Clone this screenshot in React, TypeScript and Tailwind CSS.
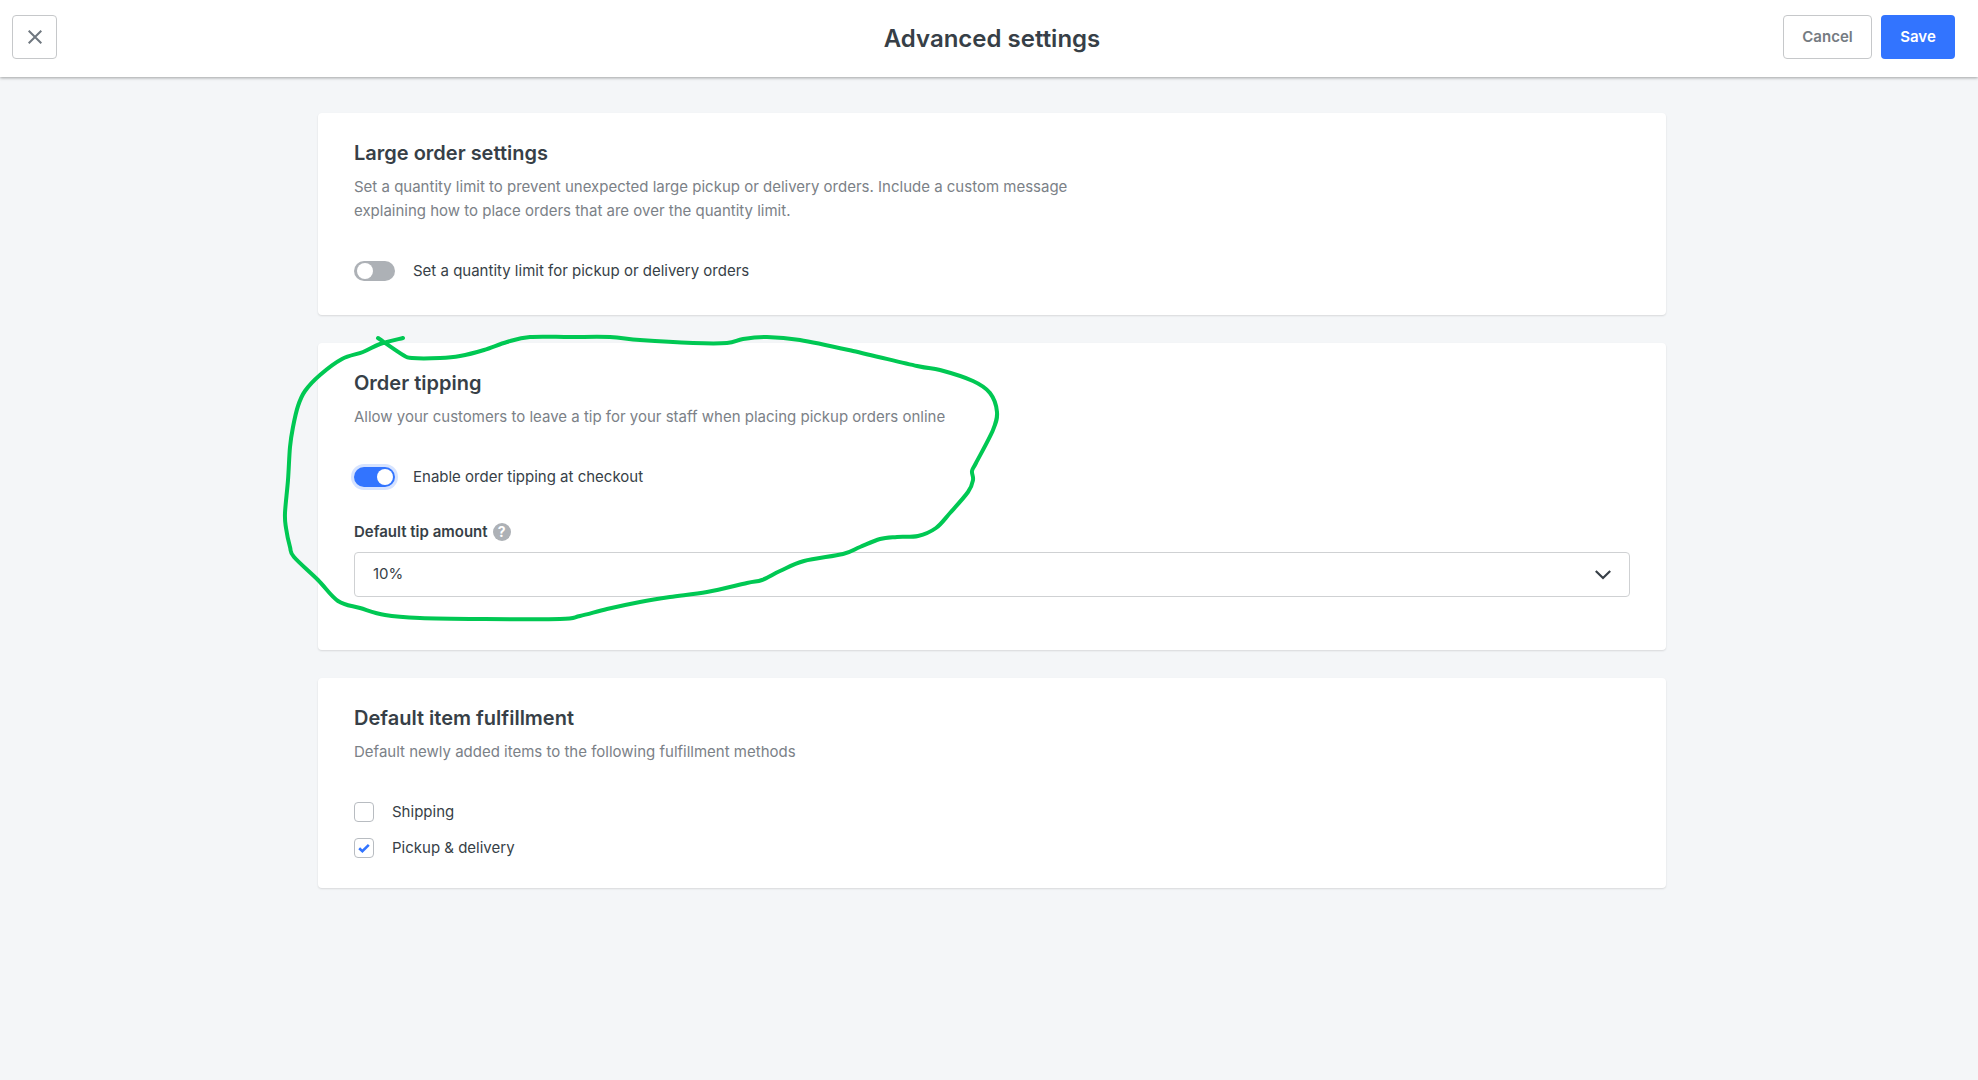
import React, { useState } from 'react';

interface CardProps {
  title: string;
  description: string;
  className?: string;
  children: React.ReactNode;
}

interface FieldProps {
  id: string;
  label: string;
  checked: boolean;
  onChange: (checked: boolean) => void;
}

// pen stroke drawn around the tipping section
const strokePoints: [number, number][] = [
  [403, 338], [380, 344], [363, 352], [342, 359], [320, 375], [305, 391], [298, 406], [293, 427],
  [290, 447], [288, 480], [285, 513], [286, 528], [290, 547], [294, 557], [318, 580], [338, 601],
  [360, 608], [385, 615], [420, 618], [480, 619], [560, 619], [580, 616], [607, 609], [640, 602],
  [670, 597], [707, 592], [747, 583], [762, 580], [780, 571], [804, 561], [843, 554], [860, 547],
  [880, 539], [897, 537], [918, 536], [936, 528], [950, 513], [968, 492], [973, 480], [972, 471],
  [976, 463], [993, 430], [997, 412], [990, 393], [973, 381], [940, 370], [917, 366], [853, 351],
  [800, 340], [767, 337], [743, 339], [727, 343], [693, 343], [640, 340], [610, 337], [570, 337],
  [530, 337], [507, 342], [484, 350], [460, 356], [440, 358], [412, 358], [403, 355], [378, 338],
];

const smoothPath = (points: [number, number][]) => {
  let d = `M${points[0][0]} ${points[0][1]}`;
  for (let i = 0; i < points.length - 1; i++) {
    const p0 = points[i - 1] || points[i];
    const p1 = points[i];
    const p2 = points[i + 1];
    const p3 = points[i + 2] || p2;
    d += `C${p1[0] + (p2[0] - p0[0]) / 6} ${p1[1] + (p2[1] - p0[1]) / 6} ${p2[0] - (p3[0] - p1[0]) / 6} ${p2[1] - (p3[1] - p1[1]) / 6} ${p2[0]} ${p2[1]}`;
  }
  return d;
};

const Card = ({ title, description, className = '', children }: CardProps) => (
  <section className={`relative rounded bg-white px-9 pt-[26px] shadow-[0_1px_2px_rgba(0,0,0,0.12)] ${className}`}>
    <h2 className="text-xl leading-7 font-semibold">{title}</h2>
    <p className="mt-2 mb-9 max-w-[752px] leading-6 text-[#7b8187]">{description}</p>
    {children}
  </section>
);

const Toggle = ({ id, label, checked, onChange }: FieldProps) => (
  <div className="flex items-center">
    <input
      id={id}
      type="checkbox"
      role="switch"
      checked={checked}
      onChange={(e) => onChange(e.target.checked)}
      className={`h-5 w-[41px] shrink-0 appearance-none rounded-full p-0.5 before:block before:size-4 before:rounded-full before:bg-white ${
        checked ? 'bg-[#3274ff] ring-[3px] ring-[#d6e3ff] before:ml-[21px]' : 'bg-[#adb1b6] before:ml-px'
      }`}
    />
    <label htmlFor={id} className="pl-[18px] leading-6">{label}</label>
  </div>
);

const Checkbox = ({ id, label, checked, onChange }: FieldProps) => (
  <div className="flex items-center">
    <span className="relative flex size-5">
      <input
        id={id}
        type="checkbox"
        checked={checked}
        onChange={(e) => onChange(e.target.checked)}
        className="size-5 appearance-none rounded border border-[#b8bcc1] bg-white"
      />
      {checked && (
        <svg viewBox="0 0 20 20" className="pointer-events-none absolute inset-0 size-5" fill="none" stroke="#3274ff" strokeWidth="2.6">
          <path d="M5.2 10.2 8.4 13.2 14.8 6.8" />
        </svg>
      )}
    </span>
    <label htmlFor={id} className="pl-[18px] leading-6">{label}</label>
  </div>
);

export default function App() {
  const [quantityLimit, setQuantityLimit] = useState(false);
  const [tipping, setTipping] = useState(true);
  const [tip, setTip] = useState('10%');
  const [shipping, setShipping] = useState(false);
  const [pickup, setPickup] = useState(true);

  return (
    <div className="min-h-screen bg-[#f4f6f8] pb-12 font-['Inter',sans-serif] text-[15px] text-[#373f47]">
      {/* Header */}
      <header className="relative grid grid-cols-[1fr_auto_1fr] items-center bg-white pt-[15px] pr-1.5 pb-[18px] pl-3 shadow-[0_1px_3px_rgba(0,0,0,0.35)]">
        <button aria-label="Close" className="flex h-11 w-[45px] items-center justify-center rounded border border-[#c6c8ca]">
          <svg viewBox="0 0 14 14" className="size-3.5" fill="none" stroke="#6f777f" strokeWidth="2">
            <path d="M.7.7 13.3 13.3M13.3.7.7 13.3" />
          </svg>
        </button>
        <h1 className="pt-1 text-2xl leading-8 font-semibold">Advanced settings</h1>
        <div className="mr-[17px] flex justify-end gap-[9px] font-semibold">
          <button className="h-11 w-[89px] rounded border border-[#c6c8ca] text-[#757b82]">Cancel</button>
          <button className="h-11 w-[74px] rounded bg-[#3274ff] text-white">Save</button>
        </div>
      </header>

      <main className="pt-9 pl-1.5">
        <div className="mx-auto flex max-w-[1348px] flex-col gap-7">
          <Card
            title="Large order settings"
            description="Set a quantity limit to prevent unexpected large pickup or delivery orders. Include a custom message explaining how to place orders that are over the quantity limit."
            className="pb-8"
          >
            <Toggle id="quantity-limit" label="Set a quantity limit for pickup or delivery orders" checked={quantityLimit} onChange={setQuantityLimit} />
          </Card>

          <Card
            title="Order tipping"
            description="Allow your customers to leave a tip for your staff when placing pickup orders online"
            className="pb-[53px]"
          >
            <Toggle id="tipping" label="Enable order tipping at checkout" checked={tipping} onChange={setTipping} />
            <div className="mt-[31px] mb-2 flex items-center gap-[5px]">
              <label htmlFor="tip" className="leading-6 font-semibold">Default tip amount</label>
              <button aria-label="Help" className="flex size-[18px] items-center justify-center rounded-full bg-[#adb1b6] text-sm leading-none font-bold text-white">
                ?
              </button>
            </div>
            <div className="relative">
              <select
                id="tip"
                value={tip}
                onChange={(e) => setTip(e.target.value)}
                className="h-[45px] w-full appearance-none rounded border border-[#cfd1d3] bg-white px-[18px]"
              >
                <option>10%</option>
                <option>15%</option>
                <option>20%</option>
              </select>
              <svg viewBox="0 0 16 10" className="pointer-events-none absolute top-[18px] right-[19px] h-2.5 w-4" fill="none" stroke="#373f47" strokeWidth="2.2">
                <path d="M.8 1 8 8 15.2 1" />
              </svg>
            </div>
            <svg
              viewBox="279 330 730 300"
              className="pointer-events-none absolute -top-[13px] -left-[39px] h-[300px] w-[730px]"
              fill="none"
              stroke="#00c853"
              strokeWidth="4"
              strokeLinecap="round"
              strokeLinejoin="round"
            >
              <path d={smoothPath(strokePoints)} />
            </svg>
          </Card>

          <Card
            title="Default item fulfillment"
            description="Default newly added items to the following fulfillment methods"
            className="pb-7"
          >
            <div className="flex flex-col gap-3">
              <Checkbox id="shipping" label="Shipping" checked={shipping} onChange={setShipping} />
              <Checkbox id="pickup" label="Pickup & delivery" checked={pickup} onChange={setPickup} />
            </div>
          </Card>
        </div>
      </main>
    </div>
  );
}
